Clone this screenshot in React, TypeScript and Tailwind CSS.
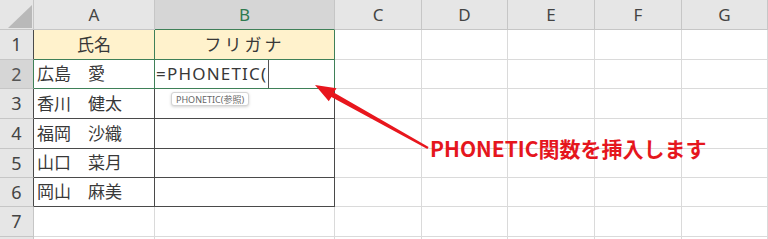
import React from 'react';

const cols = ['A', 'B', 'C', 'D', 'E', 'F', 'G'];
// header, rows 1..7, then a sliver of row 8
const rowHeights = [30, 30, 29, 30, 30, 29, 29, 30, 10];
const names = ['広島　愛', '香川　健太', '福岡　沙織', '山口　菜月', '岡山　麻美'];

const GREEN = 'border-[#3f8058]';
const DARK = 'border-[#4a4a4a]';
const LIGHT = 'border-[#dadada]';

// right / bottom border colour of each data cell (row 1..8, col 0..6)
function cellBorders(r: number, c: number) {
  let right = LIGHT;
  let bottom = LIGHT;
  if (r >= 1 && r <= 6 && c <= 1) {
    right = DARK;
    bottom = DARK;
  }
  if (r === 1 && c === 0) right = GREEN;
  if (r === 1) { if (c <= 1) bottom = GREEN; if (c === 1) right = GREEN; }
  if (r === 2 && c <= 1) { right = GREEN; bottom = GREEN; }
  return `border-r border-b ${right} ${bottom}`;
}

export default function App() {
  const font = { fontFamily: '"Noto Sans", "Noto Sans CJK JP", sans-serif' };
  return (
    <div className="relative w-[768px] h-[239px] overflow-hidden bg-white" style={font}>
      <div
        className="grid grid-cols-[34px_121px_180px_87px_86px_87px_87px_86px]"
        style={{ gridTemplateRows: rowHeights.map(h => h + 'px').join(' ') }}
      >
        {/* column header row */}
        <div className="relative bg-[#e6e6e6] border-r border-b border-[#c6c6c6]">
          <svg className="absolute inset-0" width="34" height="30" viewBox="0 0 34 30">
            <polygon points="32,5 32,28 8,28" fill="#b9b9b9" />
          </svg>
        </div>
        {cols.map((c, i) => (
          <div
            key={c}
            className={`flex items-center justify-center text-[17px] border-r border-b ${
              i === 1 ? 'bg-[#d6d6d6] text-[#2f7a4f] border-b-[#3f8058] border-r-[#c6c6c6]' : 'bg-[#e6e6e6] text-[#444] border-[#c6c6c6]'
            }`}
          >
            {c}
          </div>
        ))}

        {rowHeights.slice(1).map((_, ri) => {
          const r = ri + 1;
          const inTable = r >= 1 && r <= 6;
          return (
            <React.Fragment key={r}>
              <div
                className={`flex items-center justify-center text-[18px] border-r border-b border-b-[#c6c6c6] ${
                  r === 2 ? 'bg-[#d6d6d6] text-[#555] border-r-[#3f8058]' : 'bg-[#e6e6e6] text-[#444]'
                } ${r !== 2 && inTable ? 'border-r-[#4a4a4a]' : ''} ${!inTable ? 'border-r-[#c6c6c6]' : ''}`}
              >
                {r <= 7 ? r : ''}
              </div>
              {cols.map((c, ci) => {
                let content: React.ReactNode = null;
                let extra = '';
                if (r === 1 && ci === 0) { content = '氏名'; extra = 'bg-[#fff2cc] justify-center'; }
                if (r === 1 && ci === 1) { content = 'フリガナ'; extra = 'bg-[#fff2cc] justify-center tracking-[3px]'; }
                if (r >= 2 && r <= 6 && ci === 0) { content = names[r - 2]; extra = 'pl-[3px]'; }
                if (r === 2 && ci === 1) {
                  content = (
                    <>
                      <span className="tracking-[1.2px]">=PHONETIC(</span>
                      <span className="ml-[1px] w-px h-full bg-[#555]" />
                    </>
                  );
                  extra = 'pl-[1px]';
                }
                return (
                  <div
                    key={c}
                    className={`flex items-center text-[17px] text-[#383838] ${cellBorders(r, ci)} ${extra}`}
                  >
                    {content}
                  </div>
                );
              })}
            </React.Fragment>
          );
        })}
      </div>

      {/* function tooltip */}
      <div className="absolute left-[171px] top-[92px] h-[14px] px-[4px] flex items-center rounded-[3px] border border-[#d4d4d4] bg-white shadow-[0_1px_3px_rgba(0,0,0,0.18)] text-[9px] leading-none text-[#666]">
        PHONETIC(参照)
      </div>

      {/* annotation arrow */}
      <svg className="absolute inset-0 pointer-events-none" width="768" height="239" viewBox="0 0 768 239">
        <polygon points="315,85 336.5,88.2 333.8,92.6 428.6,147.1 427.4,148.9 331.4,96.9 328.8,101.2" fill="#e8161d" />
      </svg>
      <div
        className="absolute left-[430px] top-[134px] text-[21px] leading-[28px] font-bold text-[#e5161d]"
        style={{ fontFamily: '"Noto Sans CJK JP", sans-serif' }}
      >
        PHONETIC関数を挿入します
      </div>
    </div>
  );
}
